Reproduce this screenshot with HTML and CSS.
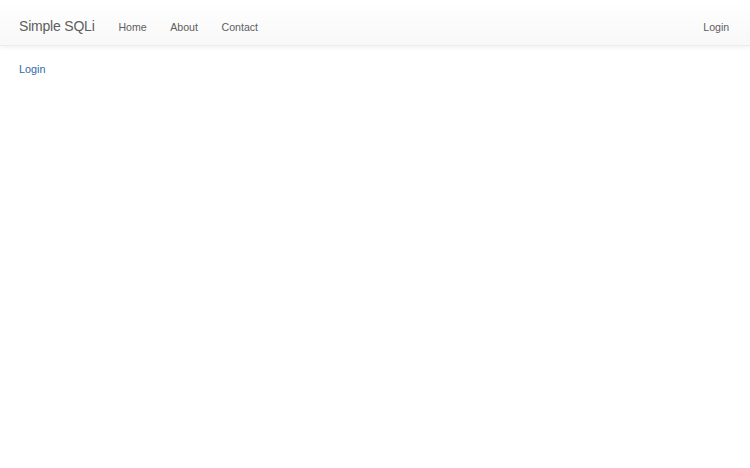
FILE: index.html
```html
<!DOCTYPE html>
<html>
<head>
<meta charset="utf-8">
<link rel="stylesheet" href="styles.css">
</head>
<body>
<nav class="navbar">
  <a class="brand" href="#">Simple SQLi</a>
  <ul class="nav">
    <li><a href="#">Home</a></li>
    <li><a href="#">About</a></li>
    <li><a href="#">Contact</a></li>
  </ul>
  <ul class="nav nav-right">
    <li><a href="#">Login</a></li>
  </ul>
</nav>
<main class="content">
  <a class="link" href="#">Login</a>
</main>
</body>
</html>
```

FILE: styles.css
```css
html, body {
  margin: 0;
  padding: 0;
  background: #fff;
  font-family: "Liberation Sans", Arial, sans-serif;
}
.navbar {
  display: flex;
  align-items: baseline;
  height: 46px;
  padding: 16px 9px 0 7px;
  background: linear-gradient(to bottom, #ffffff 0%, #f8f8f8 100%);
  box-shadow: inset 0 1px 0 rgba(255,255,255,.15), 0 1px 5px rgba(0,0,0,.075);
  border-bottom: 1px solid #ececec;
  box-sizing: border-box;
}
.brand {
  font-size: 14px;
  letter-spacing: -0.2px;
  color: #5e5e5e;
  text-decoration: none;
  padding: 0 12px;
  line-height: 20px;
}
.nav {
  list-style: none;
  margin: 0;
  padding: 0;
  display: flex;
  align-items: baseline;
}
.nav a {
  display: block;
  font-size: 10.6px;
  color: #5e5e5e;
  text-decoration: none;
  padding: 0 11.8px;
  line-height: 20px;
}
.nav-right {
  margin-left: auto;
}
.content {
  padding: 13px 19px;
}
.link {
  font-size: 10.8px;
  color: #2f6aa6;
  text-decoration: none;
}
```
